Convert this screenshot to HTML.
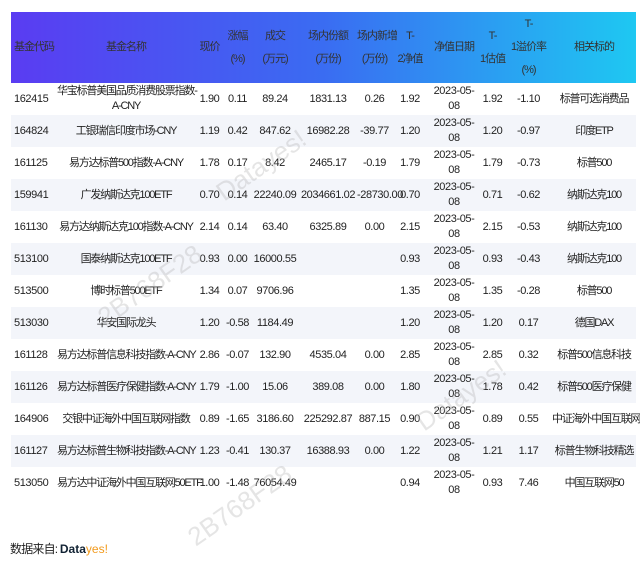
<!DOCTYPE html>
<html><head><meta charset="utf-8"><style>
body{margin:0;width:640px;height:568px;background:#fff;font-family:"Liberation Sans","Noto Sans CJK SC",sans-serif;color:#222;position:relative;overflow:hidden}
table{position:absolute;left:11px;top:12px;width:625px;border-collapse:collapse;table-layout:fixed;font-size:11px}
th{height:71px;font-weight:normal;color:#333;line-height:23px;padding:0;text-align:center;white-space:nowrap;letter-spacing:-1px;overflow:visible}
thead tr{background:linear-gradient(90deg,#5a3cf2 0%,#3a6cf2 50%,#1ec8f2 100%)}
td{height:32px;padding:0;text-align:center;line-height:15px;white-space:nowrap;letter-spacing:-0.4px;overflow:visible}
td:first-child,th:first-child{text-align:left;padding-left:3px}
tbody tr:nth-child(even){background:#f3f5fa}
td.c{letter-spacing:-1.2px}
.src{position:absolute;left:10px;top:540px;font-size:12px;color:#222;letter-spacing:-0.8px}
.src b{font-weight:bold;color:#123;letter-spacing:0}
.src i{font-style:normal;color:#f29a1c;letter-spacing:0}
.wm{position:absolute;color:rgba(180,180,180,0.35);font-size:26px;transform:rotate(-35deg)}
</style></head><body>
<table>
<colgroup><col style="width:46px"><col style="width:138px"><col style="width:29px"><col style="width:27px"><col style="width:48px"><col style="width:58px"><col style="width:35px"><col style="width:36px"><col style="width:52px"><col style="width:25px"><col style="width:47px"><col style="width:84px"></colgroup>
<thead><tr><th>基金代码</th><th>基金名称</th><th>现价</th><th>涨幅<br>(%)</th><th>成交<br>(万元)</th><th>场内份额<br>(万份)</th><th>场内新增<br>(万份)</th><th>T-<br>2净值</th><th>净值日期</th><th>T-<br>1估值</th><th>T-<br>1溢价率<br>(%)</th><th>相关标的</th></tr></thead>
<tbody>
<tr><td>162415</td><td class="c">华宝标普美国品质消费股票指数-<br>A-CNY</td><td>1.90</td><td>0.11</td><td>89.24</td><td>1831.13</td><td>0.26</td><td>1.92</td><td>2023-05-<br>08</td><td>1.92</td><td>-1.10</td><td class="c">标普可选消费品</td></tr>
<tr><td>164824</td><td class="c">工银瑞信印度市场-CNY</td><td>1.19</td><td>0.42</td><td>847.62</td><td>16982.28</td><td>-39.77</td><td>1.20</td><td>2023-05-<br>08</td><td>1.20</td><td>-0.97</td><td class="c">印度ETP</td></tr>
<tr><td>161125</td><td class="c">易方达标普500指数-A-CNY</td><td>1.78</td><td>0.17</td><td>8.42</td><td>2465.17</td><td>-0.19</td><td>1.79</td><td>2023-05-<br>08</td><td>1.79</td><td>-0.73</td><td class="c">标普500</td></tr>
<tr><td>159941</td><td class="c">广发纳斯达克100ETF</td><td>0.70</td><td>0.14</td><td>22240.09</td><td>2034661.02</td><td>-28730.00</td><td>0.70</td><td>2023-05-<br>08</td><td>0.71</td><td>-0.62</td><td class="c">纳斯达克100</td></tr>
<tr><td>161130</td><td class="c">易方达纳斯达克100指数-A-CNY</td><td>2.14</td><td>0.14</td><td>63.40</td><td>6325.89</td><td>0.00</td><td>2.15</td><td>2023-05-<br>08</td><td>2.15</td><td>-0.53</td><td class="c">纳斯达克100</td></tr>
<tr><td>513100</td><td class="c">国泰纳斯达克100ETF</td><td>0.93</td><td>0.00</td><td>16000.55</td><td></td><td></td><td>0.93</td><td>2023-05-<br>08</td><td>0.93</td><td>-0.43</td><td class="c">纳斯达克100</td></tr>
<tr><td>513500</td><td class="c">博时标普500ETF</td><td>1.34</td><td>0.07</td><td>9706.96</td><td></td><td></td><td>1.35</td><td>2023-05-<br>08</td><td>1.35</td><td>-0.28</td><td class="c">标普500</td></tr>
<tr><td>513030</td><td class="c">华安国际龙头</td><td>1.20</td><td>-0.58</td><td>1184.49</td><td></td><td></td><td>1.20</td><td>2023-05-<br>08</td><td>1.20</td><td>0.17</td><td class="c">德国DAX</td></tr>
<tr><td>161128</td><td class="c">易方达标普信息科技指数-A-CNY</td><td>2.86</td><td>-0.07</td><td>132.90</td><td>4535.04</td><td>0.00</td><td>2.85</td><td>2023-05-<br>08</td><td>2.85</td><td>0.32</td><td class="c">标普500信息科技</td></tr>
<tr><td>161126</td><td class="c">易方达标普医疗保健指数-A-CNY</td><td>1.79</td><td>-1.00</td><td>15.06</td><td>389.08</td><td>0.00</td><td>1.80</td><td>2023-05-<br>08</td><td>1.78</td><td>0.42</td><td class="c">标普500医疗保健</td></tr>
<tr><td>164906</td><td class="c">交银中证海外中国互联网指数</td><td>0.89</td><td>-1.65</td><td>3186.60</td><td>225292.87</td><td>887.15</td><td>0.90</td><td>2023-05-<br>08</td><td>0.89</td><td>0.55</td><td class="c">中证海外中国互联网</td></tr>
<tr><td>161127</td><td class="c">易方达标普生物科技指数-A-CNY</td><td>1.23</td><td>-0.41</td><td>130.37</td><td>16388.93</td><td>0.00</td><td>1.22</td><td>2023-05-<br>08</td><td>1.21</td><td>1.17</td><td class="c">标普生物科技精选</td></tr>
<tr><td>513050</td><td class="c">易方达中证海外中国互联网50ETF</td><td>1.00</td><td>-1.48</td><td>76054.49</td><td></td><td></td><td>0.94</td><td>2023-05-<br>08</td><td>0.93</td><td>7.46</td><td class="c">中国互联网50</td></tr>
</tbody></table>
<div class="wm" style="left:210px;top:150px">Datayes!</div>
<div class="wm" style="left:90px;top:270px">2B768F28</div>
<div class="wm" style="left:410px;top:380px">Datayes!</div>
<div class="wm" style="left:180px;top:490px">2B768F28</div>
<div class="src">数据来自: <b>Data</b><i>yes!</i></div>
</body></html>
